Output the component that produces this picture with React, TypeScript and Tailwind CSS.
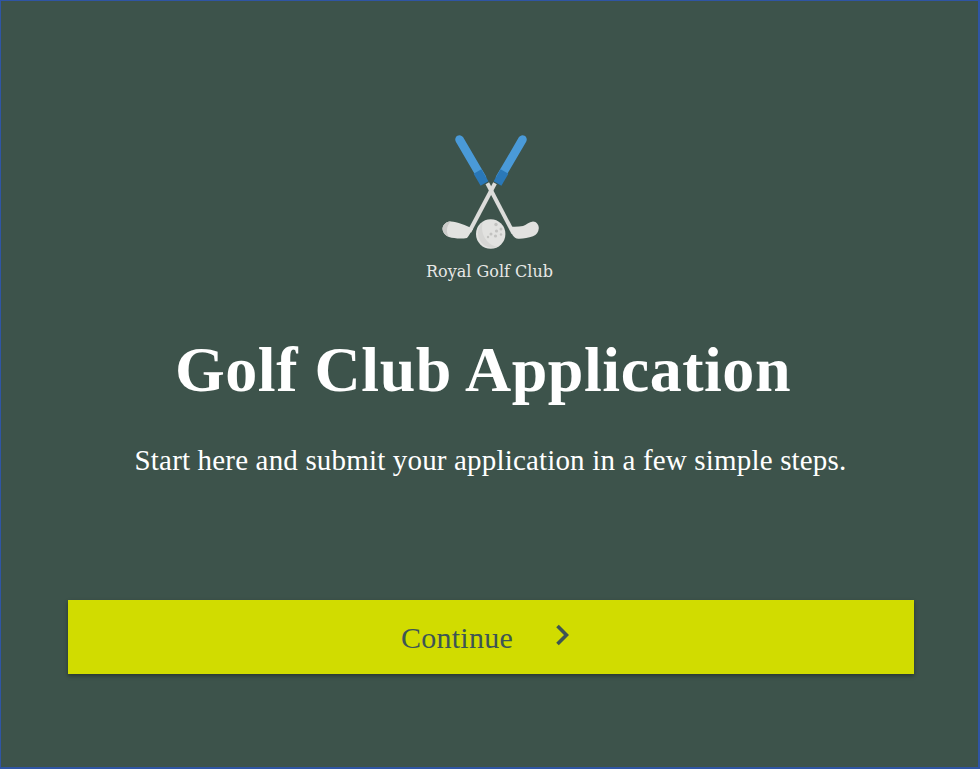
import React from "react";

function Logo() {
  return (
    <svg width="98" height="116" viewBox="0 0 98 116" className="block">
      <g fill="none">
        <path d="M46.3 49.3 L72.3 99" stroke="#dcdcda" strokeWidth="4" />
        <path d="M54 49.3 L28.3 97.7" stroke="#dcdcda" strokeWidth="4" />
        <path d="M18.5 5.5 L41 44" stroke="#4a9ad8" strokeWidth="8.5" strokeLinecap="round" />
        <path d="M81.5 5.5 L59 44" stroke="#4a9ad8" strokeWidth="8.5" strokeLinecap="round" />
        <path d="M36.5 37.5 L43.5 49.5" stroke="#2a78b8" strokeWidth="9" />
        <path d="M63.5 37.5 L56.5 49.5" stroke="#2a78b8" strokeWidth="9" />
      </g>
      <path d="M32 95 C29 99 28 102 26 104 C20 105 13 104.5 8 103 C4 101.5 1.5 98 1.5 94.5 C2 90 6 87.3 10 87.5 C16 88 25 91 32 95 Z" fill="#e2e2e0" />
      <path d="M10 87.5 C6 87.3 2 90 1.5 94.5 C1.5 98 4 101.5 8 103 C5 99 5 92 10 87.5 Z" fill="#cbcbc9" />
      <path d="M68 92.5 C73 92.8 78 92.8 82 92 C85 91 88 88 92 87.5 C95.5 87.5 98 91 97.8 94.3 C97.5 98 95.5 101 92 102.3 C87 104 82 105 77.3 104.8 C75 104.5 73 103.5 71.5 101 Z" fill="#e2e2e0" />
      <circle cx="49.7" cy="100" r="14.7" fill="#e2e2e0" />
      <path d="M42 88 A14.7 14.7 0 0 0 57 112.8 C47 112 38 100 42 88 Z" fill="#d6d6d4" />
      <g fill="#c2c2c0">
        <circle cx="55" cy="90.5" r="1.7" /><circle cx="60" cy="95" r="1.5" /><circle cx="55.5" cy="97" r="1.6" />
        <circle cx="50" cy="100" r="1.5" /><circle cx="54.5" cy="102" r="1.6" /><circle cx="60" cy="100.5" r="1.2" /><circle cx="47" cy="103" r="1.2" />
      </g>
    </svg>
  );
}

export default function App() {
  return (
    <div className="box-border flex h-[769px] w-[980px] flex-col items-center border border-[#2f55a4] border-b-2 border-r-2 bg-[#3d534b] text-white">
      <div className="mt-[133px]">
        <Logo />
      </div>
      <div className="mt-[13px] font-['DejaVu_Serif',serif] text-[16px] leading-[18px] text-[#e8e8e6]">
        Royal Golf Club
      </div>
      <h1 className="ml-[-13px] mt-[50px] font-['Liberation_Serif',serif] text-[64px] font-bold leading-[78px] tracking-[0.55px]">
        Golf Club Application
      </h1>
      <p className="ml-[2px] mt-[32px] font-['Liberation_Serif',serif] text-[29px] leading-[38px] tracking-[0.17px]">
        Start here and submit your application in a few simple steps.
      </p>
      <div className="ml-[3px] mt-[121px] flex h-[74px] w-[846px] items-center justify-center bg-[#d1dc00] shadow-[0_2px_4px_rgba(0,0,0,0.35)]">
        <span className="ml-[-12px] font-['Liberation_Serif',serif] text-[30px] tracking-[0.25px] text-[#3d5554]">Continue</span>
        <svg width="14" height="22" viewBox="0 0 14 22" className="ml-[42px] mb-[4px]">
          <path d="M2.5 2 L11.5 11 L2.5 20" fill="none" stroke="#3d5554" strokeWidth="3.6" />
        </svg>
      </div>
    </div>
  );
}
